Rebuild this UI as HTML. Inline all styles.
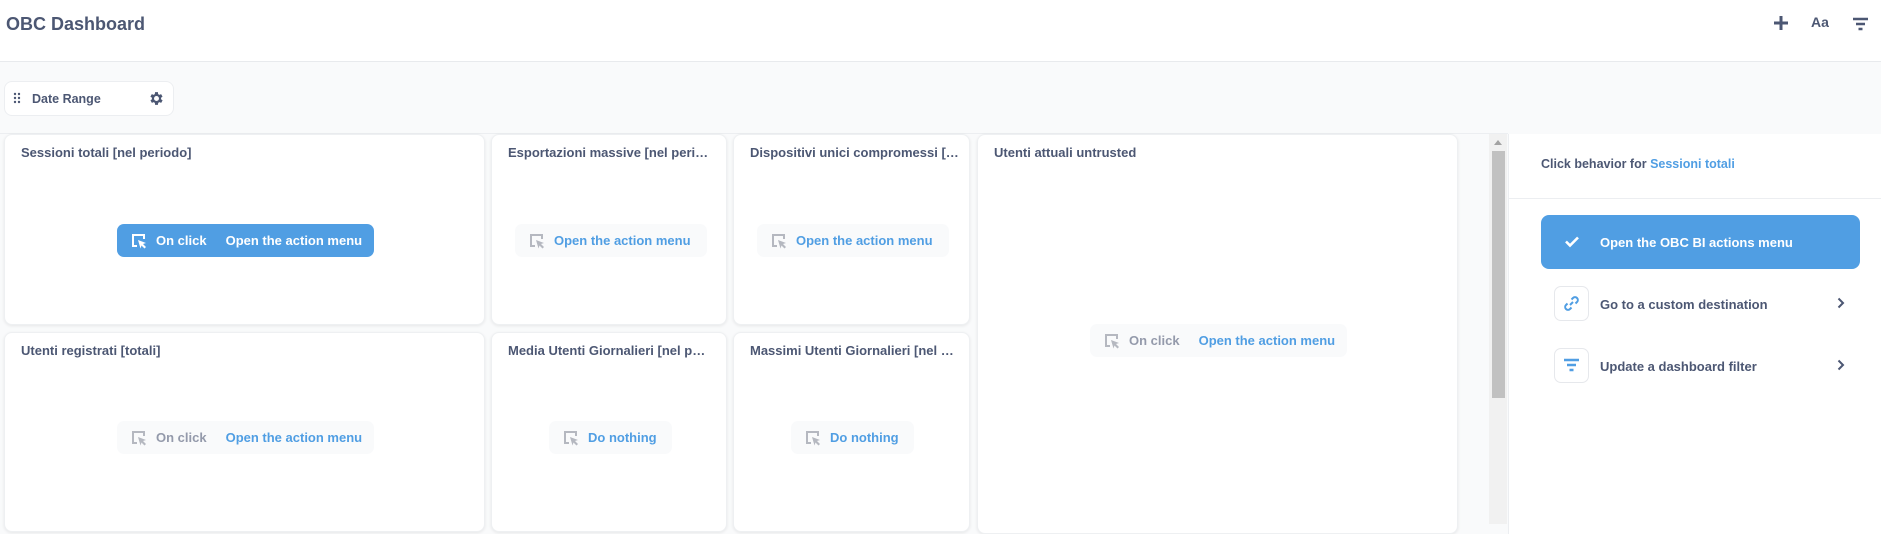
<!DOCTYPE html>
<html><head><meta charset="utf-8"><style>
*{box-sizing:border-box;margin:0;padding:0}
body{width:1881px;height:524px;overflow:hidden;background:#f9fafb;font-family:"Liberation Sans",sans-serif;color:#4c5773;position:relative}
.abs{position:absolute}
.hdr{left:0;top:0;width:1881px;height:62px;background:#fff;border-bottom:1px solid #e8eaed}
.card{position:absolute;background:#fff;border-radius:8px;box-shadow:0 1px 3px rgba(0,0,0,0.08);border:1px solid #eef0f2;overflow:hidden}
.card .t{position:absolute;left:16px;top:10px;font-size:13px;font-weight:bold;white-space:nowrap}
.pill{position:absolute;height:33px;border-radius:7px;background:#f9fafb;display:flex;align-items:center;font-size:13px;font-weight:bold;white-space:nowrap;padding-left:14px}
.pill.b{background:#509ee3;color:#fff}
.pill .oc{color:#949aab;margin-right:19px}
.pill.b .oc{color:#fff}
.pill .am{color:#509ee3}
.pill.b .am{color:#fff}
.ic{width:16px;height:16px;margin-right:9px}
</style></head><body>
<div class="abs hdr"></div>
<div class="abs" style="left:6px;top:14px;font-size:18px;font-weight:bold">OBC Dashboard</div>
<svg class="abs" style="left:1772px;top:14px" width="18" height="18" viewBox="0 0 18 18"><path d="M9 2v14M2 9h14" stroke="#4c5773" stroke-width="3"/></svg>
<div class="abs" style="left:1811px;top:14px;font-size:14px;font-weight:bold">Aa</div>
<svg class="abs" style="left:1852px;top:17px" width="17" height="15" viewBox="0 0 17 15"><path d="M1 2h15M4 7h9M6.5 12h4" stroke="#4c5773" stroke-width="2.4"/></svg>

<div class="abs" style="left:4px;top:81px;width:170px;height:35px;background:#fff;border:1px solid #eceef1;border-radius:8px"></div>
<svg class="abs" style="left:13px;top:92px" width="8" height="12"><g fill="#4c5773"><circle cx="2" cy="2" r="1.2"/><circle cx="6" cy="2" r="1.2"/><circle cx="2" cy="6" r="1.2"/><circle cx="6" cy="6" r="1.2"/><circle cx="2" cy="10" r="1.2"/><circle cx="6" cy="10" r="1.2"/></g></svg>
<div class="abs" style="left:32px;top:92px;font-size:12.5px;font-weight:bold">Date Range</div>
<svg class="abs" style="left:148px;top:90px" width="17" height="17" viewBox="0 0 24 24"><path fill="#4c5773" d="M19.4 13a7.5 7.5 0 000-2l2.1-1.6-2-3.5-2.5 1a7.7 7.7 0 00-1.7-1L15 3h-4l-.4 2.9a7.7 7.7 0 00-1.7 1l-2.5-1-2 3.5L6.6 11a7.5 7.5 0 000 2l-2.1 1.6 2 3.5 2.5-1a7.700 7.7 0 001.7 1L11 21h4l.4-2.9a7.7 7.7 0 001.7-1l2.5 1 2-3.5zM13 15.5a3.5 3.5 0 110-7 3.5 3.5 0 010 7z" transform="translate(-1 0)"/></svg>
<div class="abs" style="left:0;top:133px;width:1508px;height:1px;background:#eceef1"></div>

<svg width="0" height="0" style="position:absolute"><defs><symbol id="cur" viewBox="0 0 16 16"><path d="M6 13H2V2h11v4" fill="none" stroke="currentColor" stroke-width="2"/><path d="M7 7l8 3-3 1 3 3-1.5 1.5-3-3-1 3z" fill="currentColor"/></symbol></defs></svg>

<div class="card" style="left:4px;top:134px;width:481px;height:191px"><div class="t">Sessioni totali [nel periodo]</div>
<div class="pill b" style="left:112px;top:89px;width:257px"><svg class="ic" style="color:#fff"><use href="#cur"/></svg><span class="oc">On click</span><span class="am">Open the action menu</span></div></div>
<div class="card" style="left:491px;top:134px;width:236px;height:191px"><div class="t">Esportazioni massive [nel peri…</div>
<div class="pill" style="left:23px;top:89px;width:192px"><svg class="ic" style="color:#b5b8c0"><use href="#cur"/></svg><span class="am">Open the action menu</span></div></div>
<div class="card" style="left:733px;top:134px;width:237px;height:191px"><div class="t">Dispositivi unici compromessi […</div>
<div class="pill" style="left:23px;top:89px;width:192px"><svg class="ic" style="color:#b5b8c0"><use href="#cur"/></svg><span class="am">Open the action menu</span></div></div>
<div class="card" style="left:977px;top:134px;width:481px;height:400px"><div class="t">Utenti attuali untrusted</div>
<div class="pill" style="left:112px;top:189px;width:257px"><svg class="ic" style="color:#b5b8c0"><use href="#cur"/></svg><span class="oc">On click</span><span class="am">Open the action menu</span></div></div>

<div class="card" style="left:4px;top:332px;width:481px;height:200px"><div class="t">Utenti registrati [totali]</div>
<div class="pill" style="left:112px;top:88px;width:257px"><svg class="ic" style="color:#b5b8c0"><use href="#cur"/></svg><span class="oc">On click</span><span class="am">Open the action menu</span></div></div>
<div class="card" style="left:491px;top:332px;width:236px;height:200px"><div class="t">Media Utenti Giornalieri [nel p…</div>
<div class="pill" style="left:57px;top:88px;width:123px"><svg class="ic" style="color:#b5b8c0"><use href="#cur"/></svg><span class="am">Do nothing</span></div></div>
<div class="card" style="left:733px;top:332px;width:237px;height:200px"><div class="t">Massimi Utenti Giornalieri [nel …</div>
<div class="pill" style="left:57px;top:88px;width:123px"><svg class="ic" style="color:#b5b8c0"><use href="#cur"/></svg><span class="am">Do nothing</span></div></div>

<div class="abs" style="left:1489px;top:134px;width:18px;height:390px;background:#f1f1f1"></div>
<div class="abs" style="left:1492px;top:151px;width:13px;height:247px;background:#c1c1c1"></div>
<svg class="abs" style="left:1494px;top:140px" width="8" height="5"><path d="M0 5L4 0 8 5z" fill="#a3a3a3"/></svg>

<div class="abs" style="left:1508px;top:134px;width:373px;height:400px;background:#fff;border-left:1px solid #eceef1"></div>
<div class="abs" style="left:1541px;top:157px;font-size:12.5px;font-weight:bold">Click behavior for <span style="color:#509ee3">Sessioni totali</span></div>
<div class="abs" style="left:1508px;top:198px;width:373px;height:1px;background:#eceef1"></div>
<div class="abs" style="left:1541px;top:215px;width:319px;height:54px;background:#509ee3;border-radius:8px"></div>
<svg class="abs" style="left:1564px;top:235px" width="16" height="13"><path d="M2 6.5l4 4 8-8" stroke="#fff" stroke-width="2.6" fill="none"/></svg>
<div class="abs" style="left:1600px;top:235px;font-size:13px;font-weight:bold;color:#fff">Open the OBC BI actions menu</div>

<div class="abs" style="left:1554px;top:286px;width:35px;height:35px;border:1px solid #e6e8ec;border-radius:7px;background:#fff"></div>
<svg class="abs" style="left:1563px;top:295px" width="17" height="17" viewBox="0 0 17 17"><g fill="none" stroke="#509ee3" stroke-width="2"><path d="M7 10l3-3"/><path d="M8.5 4.5l1.5-1.5a2.8 2.8 0 014 4L12.5 8.5"/><path d="M4.5 8.5L3 10a2.8 2.8 0 004 4l1.5-1.5"/></g></svg>
<div class="abs" style="left:1600px;top:297px;font-size:13px;font-weight:bold">Go to a custom destination</div>
<svg class="abs" style="left:1837px;top:297px" width="8" height="12"><path d="M1.5 1.5l4.5 4.5-4.5 4.5" stroke="#4c5773" stroke-width="2" fill="none"/></svg>

<div class="abs" style="left:1554px;top:348px;width:35px;height:35px;border:1px solid #e6e8ec;border-radius:7px;background:#fff"></div>
<svg class="abs" style="left:1563px;top:358px" width="17" height="15"><path d="M1 2h15M4 7h9M6.5 12h4" stroke="#509ee3" stroke-width="2.4"/></svg>
<div class="abs" style="left:1600px;top:359px;font-size:13px;font-weight:bold">Update a dashboard filter</div>
<svg class="abs" style="left:1837px;top:359px" width="8" height="12"><path d="M1.5 1.5l4.5 4.5-4.5 4.5" stroke="#4c5773" stroke-width="2" fill="none"/></svg>
</body></html>
